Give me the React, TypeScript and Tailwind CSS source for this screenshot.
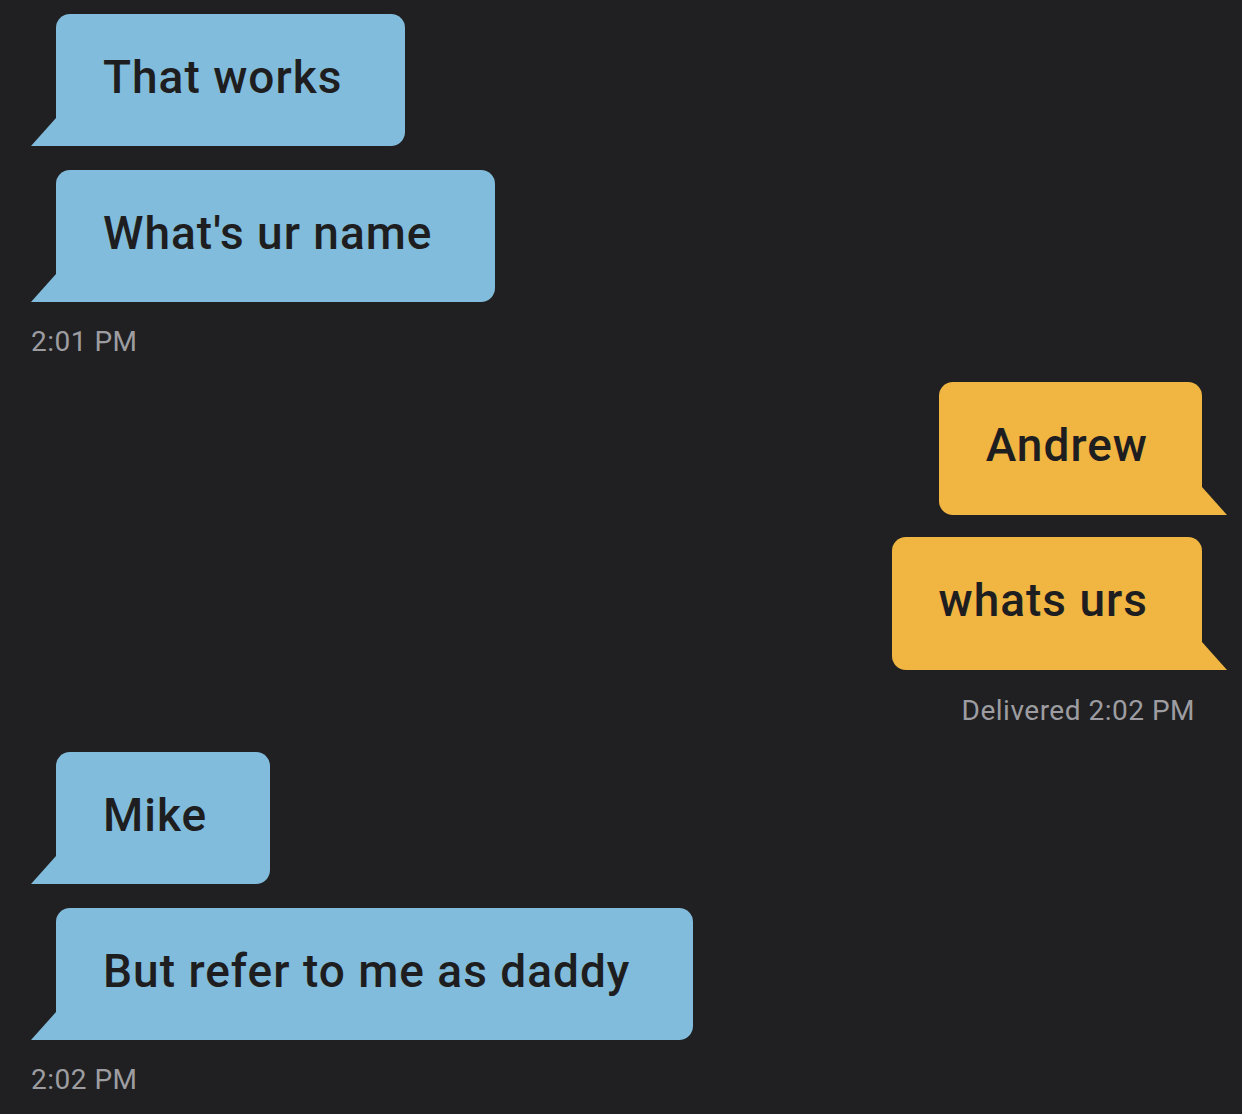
import React from "react";

type Msg = { text: string; mine?: boolean };

function Bubble({ text, mine }: Msg) {
  return (
    <div className={mine ? "flex justify-end" : "flex justify-start"}>
      <div
        className={
          "relative flex items-center text-[46px] font-medium text-[#1e1e20] " +
          (mine
            ? "h-[133px] pl-[47px] pr-[54px] bg-[#f1b542] rounded-[14px] rounded-br-none"
            : "h-[132px] pl-[47px] pr-[63px] bg-[#82bcdc] rounded-[14px] rounded-bl-none")
        }
      >
        <span className="-mt-[6px] tracking-[1px]">{text}</span>
        {mine ? (
          <svg className="absolute right-[-25px] bottom-0" width="25" height="28" viewBox="0 0 25 28">
            <polygon points="0,0 25,28 0,28" fill="#f1b542" />
          </svg>
        ) : (
          <svg className="absolute left-[-25px] bottom-0" width="25" height="28" viewBox="0 0 25 28">
            <polygon points="25,0 0,28 25,28" fill="#82bcdc" />
          </svg>
        )}
      </div>
    </div>
  );
}

function Stamp({ text, right }: { text: string; right?: boolean }) {
  return (
    <div
      className={
        "h-[40px] flex items-center text-[28px] tracking-[0.5px] text-[#9d9da1] " +
        (right ? "justify-end mr-[7px]" : "-ml-[25px]")
      }
    >
      {text}
    </div>
  );
}

export default function App() {
  return (
    <div
      className="min-h-screen w-full bg-[#202022] pl-[56px] pr-[40px] pt-[14px]"
      style={{ fontFamily: "Roboto, 'Open Sans', sans-serif" }}
    >
      <div className="flex flex-col">
        <Bubble text="That works" />
        <div className="h-[24px]" />
        <Bubble text="What's ur name" />
        <div className="h-[20px]" />
        <Stamp text="2:01 PM" />
        <div className="h-[20px]" />
        <div className="flex flex-col gap-[22px]">
          <Bubble text="Andrew" mine />
          <Bubble text="whats urs" mine />
        </div>
        <div className="h-[21px]" />
        <Stamp text="Delivered 2:02 PM" right />
        <div className="h-[21px]" />
        <Bubble text="Mike" />
        <div className="h-[24px]" />
        <Bubble text="But refer to me as daddy" />
        <div className="h-[20px]" />
        <Stamp text="2:02 PM" />
      </div>
    </div>
  );
}
